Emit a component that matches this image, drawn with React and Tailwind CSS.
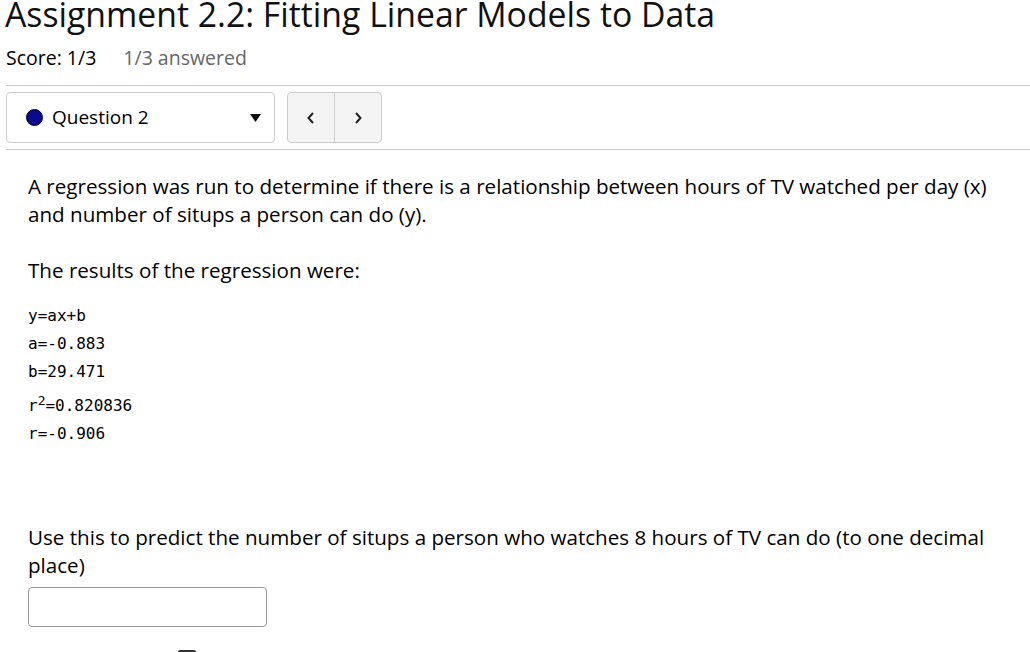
import React from 'react';

const sans = { fontFamily: '"Open Sans", sans-serif' };
const mono = { fontFamily: '"DejaVu Sans Mono", monospace' };

const ChevronLeft = () => (
  <svg width="10" height="14" viewBox="0 0 10 14" fill="none" stroke="#222" strokeWidth="2">
    <path d="M7 2 L2.5 7 L7 12" />
  </svg>
);

const ChevronRight = () => (
  <svg width="10" height="14" viewBox="0 0 10 14" fill="none" stroke="#222" strokeWidth="2">
    <path d="M3 2 L7.5 7 L3 12" />
  </svg>
);

export default function App() {
  return (
    <div className="bg-white w-[1030px] h-[652px] overflow-hidden text-black" style={sans}>
      {/* Header */}
      <h1 className="pl-[5px] text-[33.75px] leading-[36px] mt-[-4px] font-normal text-[#111]">
        Assignment 2.2: Fitting Linear Models to Data
      </h1>
      <div className="flex items-center pl-[6px] mt-[13px] text-[19.5px] leading-[26px]">
        <span>Score: 1/3</span>
        <span className="ml-[27px] text-[#666]">1/3 answered</span>
      </div>

      {/* Question navigation */}
      <div className="ml-[6px] mt-[14px] border-t border-b border-[#ccc] pt-[6px] pb-[6px] flex items-center gap-[12px]">
        <div className="w-[269px] h-[51px] border border-[#ccc] rounded-[4px] flex items-center pl-[19px] pr-[13px]">
          <span className="w-[17px] h-[17px] rounded-full bg-[#0a0a8c] border border-[#000040]" />
          <span className="ml-[9px] text-[19px]">Question 2</span>
          <svg className="ml-auto" width="11" height="8" viewBox="0 0 11 8">
            <path d="M0 0 H11 L5.5 8 Z" fill="#111" />
          </svg>
        </div>
        <div className="flex h-[51px] border border-[#ccc] rounded-[4px] bg-[#f4f4f4] overflow-hidden">
          <button className="w-[47px] flex items-center justify-center border-r border-[#ccc]">
            <ChevronLeft />
          </button>
          <button className="w-[46px] flex items-center justify-center">
            <ChevronRight />
          </button>
        </div>
      </div>

      {/* Question body */}
      <div className="pl-[28px] pr-[20px] pt-[22px] text-[20.6px] leading-[28px]">
        <p>
          A regression was run to determine if there is a relationship between hours of TV watched per day (x)
          and number of situps a person can do (y).
        </p>
        <p className="mt-[28px]">The results of the regression were:</p>
        <div className="mt-[18px] text-[16px] leading-[28px]" style={mono}>
          <div>y=ax+b</div>
          <div>a=-0.883</div>
          <div>b=29.471</div>
          <div className="mt-[6px]">
            r<sup className="text-[13px]">2</sup>=0.820836
          </div>
          <div>r=-0.906</div>
        </div>
        <p className="mt-[75px]">
          Use this to predict the number of situps a person who watches 8 hours of TV can do (to one decimal
          place)
        </p>
        <input
          type="text"
          className="mt-[8px] w-[239px] h-[40px] border border-[#999] rounded-[4px] block"
        />
        <div className="mt-[23px] ml-[150px] w-[18px] h-[18px] border-2 border-[#333] rounded-[2px]" />
      </div>
    </div>
  );
}
